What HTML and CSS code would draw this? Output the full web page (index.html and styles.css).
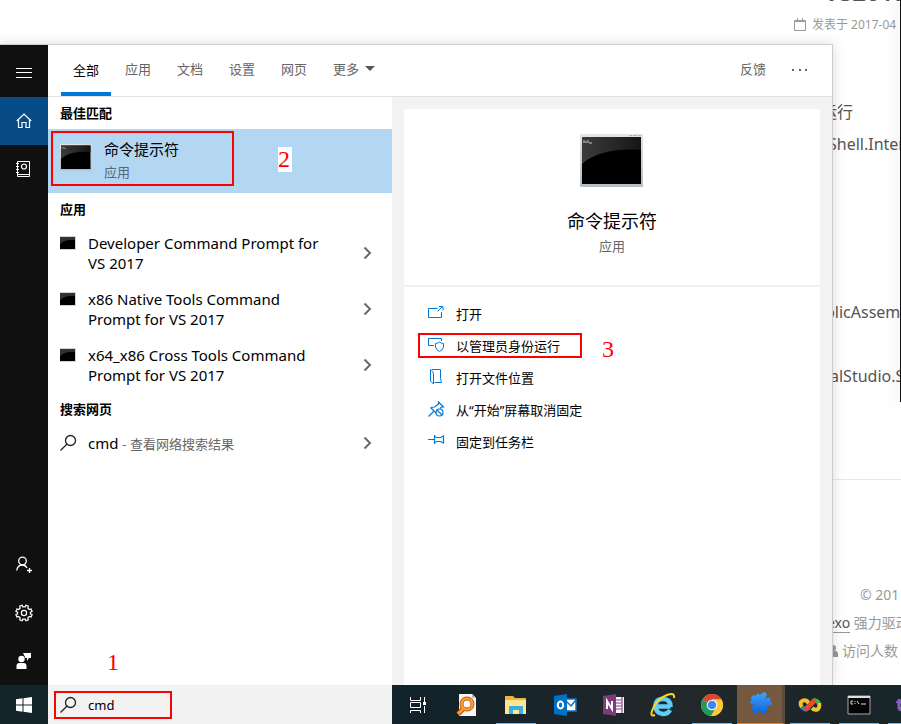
FILE: index.html
```html
<!DOCTYPE html>
<html lang="zh-CN">
<head>
  <meta charset="UTF-8">
  <meta name="viewport" content="width=device-width, initial-scale=1.0">
  <title>命令提示符</title>
  <link rel="stylesheet" href="styles.css">
</head>
<body>
  <!-- shared console icon -->
  <svg class="defs" aria-hidden="true">
    <defs>
      <linearGradient id="glass" x1="0" y1="0" x2="1" y2="0">
        <stop offset="0" stop-color="#3c3c3c"/>
        <stop offset="1" stop-color="#161616"/>
      </linearGradient>
      <linearGradient id="frame" x1="0" y1="0" x2="0" y2="1">
        <stop offset="0" stop-color="#e2e6ea"/>
        <stop offset="1" stop-color="#b4bcc4"/>
      </linearGradient>
      <linearGradient id="leaf" x1="0" y1="0" x2="0" y2="1">
        <stop offset="0" stop-color="#3da4ff"/>
        <stop offset="1" stop-color="#0a62d8"/>
      </linearGradient>
      <symbol id="console" viewBox="0 0 64 54">
        <rect x="0" y="0" width="63" height="53" rx="1" fill="url(#frame)"/>
        <path d="M49 1.500h3M53 1.500h4M58 1.500h3" stroke="#aeb4ba"/>
        <rect x="2" y="3" width="59" height="47" fill="#000"/>
        <path d="M2 3h59v13C36 14 14 19 2 30z" fill="url(#glass)"/>
        <path d="M4 6v3M5 8h2M8 6v3M9 9h3" stroke="#ccc" fill="none"/>
      </symbol>
      <symbol id="console-small" viewBox="0 0 16 14">
        <rect width="16" height="14" fill="#cfd4d8"/>
        <rect y="1" width="15" height="12" fill="#000"/>
        <path d="M0 1h15v3Q6 3 0 8z" fill="#333"/>
      </symbol>
      <symbol id="search" viewBox="0 0 18 18">
        <circle cx="10.500" cy="6.500" r="5" fill="none" stroke="#222" stroke-width="1.300"/>
        <path d="M7 10L.5 16.500" stroke="#222" stroke-width="1.300"/>
      </symbol>
      <symbol id="chevron" viewBox="0 0 10 14">
        <path d="M2.500 1.500L8 7L2.500 12.500" fill="none" stroke="#6a6a6a" stroke-width="2"/>
      </symbol>
    </defs>
  </svg>

  <div class="desktop">
    <main class="blog">
      <h1 class="blog-title">VS2017</h1>
      <p class="post-meta">
        <svg width="12" height="13" viewBox="0 0 12 13" fill="none" stroke="#999"><path d="M.5 2.500h11v10H.5zM.5 3.500h11M3.500 0v3M8.500 0v3"/></svg>
        发表于 2017-04
      </p>
      <p class="post-line post-run">运行</p>
      <p class="post-line post-shell">Shell.Inter</p>
      <p class="post-line post-public">blicAssem</p>
      <p class="post-line post-studio">alStudio.S</p>
      <footer class="blog-footer">
        <p class="copyright">© 201</p>
        <p class="powered"><a href="#">exo</a> 强力驱动</p>
        <p class="visitors">
          <svg width="10" height="12" viewBox="0 0 10 12" fill="#999"><circle cx="5" cy="3" r="3"/><path d="M0 12V9q0-3 3-3.500 2 1.500 4 0 3 .5 3 3.500v3z"/></svg>
          访问人数
        </p>
      </footer>
    </main>
    <div class="side-window"></div>

    <section class="search-panel">
      <nav class="rail">
        <button class="rail-btn menu" aria-label="菜单">
          <svg width="16" height="10" viewBox="0 0 16 10" stroke="#fff"><path d="M0 .5h16M0 4.500h16M0 9.500h16"/></svg>
        </button>
        <button class="rail-btn active" aria-label="主页">
          <svg width="16" height="16" viewBox="0 0 16 16" fill="none" stroke="#fff" stroke-width="1.200"><path d="M.8 8L8 1l7.200 7M2.500 6.500v8h3.500V9.500h4v5h3.500v-8"/></svg>
        </button>
        <button class="rail-btn" aria-label="笔记本">
          <svg width="16" height="18" viewBox="0 0 16 18" fill="none" stroke="#fff"><path d="M1.500 1.500h12v15h-12zM1.500 14.500h12M0 3.500h3M0 6.500h3M0 9.500h3M0 12.500h3"/><circle cx="8" cy="6.500" r="2.500" stroke-width="1.200"/></svg>
        </button>
        <button class="rail-btn push" aria-label="登录">
          <svg width="17" height="18" viewBox="0 0 17 18" fill="none" stroke="#fff" stroke-width="1.300"><circle cx="6.500" cy="5" r="3.800"/><path d="M.7 14.500Q1.500 9 6.500 9q3 0 4.500 3M11 14.500h5M13.500 12v5"/></svg>
        </button>
        <button class="rail-btn" aria-label="设置">
          <svg width="18" height="18" viewBox="0 0 18 18" fill="none" stroke="#fff" stroke-width="1.200"><path d="M7.200 1.200l.6 1.700h2.400l.6-1.700 2.500 1-.5 1.800 1.500 1.500 1.800-.5 1 2.500-1.700.6v1.800l1.700.6-1 2.500-1.800-.5-1.500 1.500.5 1.800-2.500 1-.6-1.700H7.800l-.6 1.700-2.500-1 .5-1.800L3.700 12.500l-1.800.5-1-2.500 1.700-.6V8.100L.9 7.500l1-2.500 1.800.5L5.200 4l-.5-1.800z"/><circle cx="9" cy="9" r="2.600"/></svg>
        </button>
        <button class="rail-btn" aria-label="反馈">
          <svg width="16" height="16" viewBox="0 0 16 16" fill="#fff"><path d="M7 0h8v5h-2l-2 3V5H9.500z"/><circle cx="5.500" cy="6" r="3.200"/><path d="M.5 16v-3q0-3 3-3h4q3 0 3 3v3z"/></svg>
        </button>
      </nav>

      <div class="content">
        <header class="tabs">
          <button class="tab selected">全部</button>
          <button class="tab">应用</button>
          <button class="tab">文档</button>
          <button class="tab">设置</button>
          <button class="tab">网页</button>
          <button class="tab more">更多 <svg width="10" height="5" viewBox="0 0 10 5"><path d="M0 0h10L5 5z" fill="#555"/></svg></button>
          <button class="tab feedback">反馈</button>
          <button class="tab dots" aria-label="更多选项"><svg width="16" height="2" viewBox="0 0 16 2" fill="#666"><path d="M0 0h2v2H0zM7 0h2v2H7zM13 0h2v2h-2z"/></svg></button>
        </header>

        <div class="columns">
          <div class="results">
            <h2>最佳匹配</h2>
            <button class="best">
              <svg width="32" height="27"><use href="#console"/></svg>
              <span class="best-text">
                <span class="best-name">命令提示符</span>
                <span class="best-kind">应用</span>
              </span>
              <span class="mark mark-best"></span>
              <span class="step step-two">2</span>
            </button>

            <h2>应用</h2>
            <button class="result">
              <svg class="app-icon" width="16" height="14"><use href="#console-small"/></svg>
              <span class="result-name">Developer Command Prompt for VS 2017</span>
              <svg class="go" width="10" height="14"><use href="#chevron"/></svg>
            </button>
            <button class="result">
              <svg class="app-icon" width="16" height="14"><use href="#console-small"/></svg>
              <span class="result-name">x86 Native Tools Command Prompt for VS 2017</span>
              <svg class="go" width="10" height="14"><use href="#chevron"/></svg>
            </button>
            <button class="result">
              <svg class="app-icon" width="16" height="14"><use href="#console-small"/></svg>
              <span class="result-name">x64_x86 Cross Tools Command Prompt for VS 2017</span>
              <svg class="go" width="10" height="14"><use href="#chevron"/></svg>
            </button>

            <h2>搜索网页</h2>
            <button class="result web">
              <svg width="18" height="18"><use href="#search"/></svg>
              <span class="result-name">cmd <small>- 查看网络搜索结果</small></span>
              <svg class="go" width="10" height="14"><use href="#chevron"/></svg>
            </button>
            <span class="step step-one">1</span>
          </div>

          <div class="preview">
            <div class="card">
              <div class="app-head">
                <svg width="64" height="54"><use href="#console"/></svg>
                <div class="app-name">命令提示符</div>
                <div class="app-kind">应用</div>
              </div>
              <div class="actions">
                <button class="action">
                  <svg width="18" height="16" viewBox="0 0 18 16" fill="none" stroke="#0078d7"><path d="M9.500 3.500h-9v9h13V7M9.500 6.500l5-5M11 1.500h4v4"/></svg>
                  打开
                </button>
                <button class="action">
                  <svg width="18" height="16" viewBox="0 0 18 16" fill="none" stroke="#0078d7"><path d="M6 8.500H.5v-7h13V4M11.500 5Q9.500 6.500 7.500 6.500V10q1 3.500 4 4.500 3-1 4-4.500V6.500q-2 0-4-1.500z"/></svg>
                  以管理员身份运行
                  <span class="mark mark-admin"></span>
                  <span class="step step-three">3</span>
                </button>
                <button class="action">
                  <svg width="18" height="16" viewBox="0 0 18 16" fill="none" stroke="#0078d7"><path d="M4 .5h8.500v9l1 4H6.500M2.500.5v11.500l3 3V5q0-3-3-4.500"/></svg>
                  打开文件位置
                </button>
                <button class="action">
                  <svg width="18" height="16" viewBox="0 0 18 16" fill="none" stroke="#0078d7" stroke-width="1.200"><path d="M.5 15.500l5-5M2.500 6.500l6 6M3 6.500l3.500-.5 4-3V1l5 5h-2L12 7.500"/><circle cx="11.500" cy="11.500" r="3.500"/><path d="M9 9l5 5"/></svg>
                  从“开始”屏幕取消固定
                </button>
                <button class="action">
                  <svg width="18" height="16" viewBox="0 0 18 16" fill="none" stroke="#0078d7" stroke-width="1.200"><path d="M0 6.500h6.500M6.500 2v9M6.500 3.500L9 4.500h3.500l3-1.500v7l-3-1.500H9l-2.500 1"/></svg>
                  固定到任务栏
                </button>
              </div>
            </div>
          </div>
        </div>
      </div>
    </section>

    <footer class="taskbar">
      <button class="start" aria-label="开始">
        <svg width="16" height="16" viewBox="0 0 16 16" fill="#fff"><path d="M0 2.200L6.500 1.300v6.200H0zM7.500 1.200L16 0v7.500H7.500zM0 8.500h6.500v6.200L0 13.800zM7.500 8.500H16V16l-8.500-1.200z"/></svg>
      </button>
      <label class="search-box">
        <svg width="18" height="18"><use href="#search"/></svg>
        <input type="text" value="cmd" aria-label="搜索">
        <span class="mark mark-search"></span>
      </label>
      <div class="tasks">
        <button class="task" aria-label="任务视图">
          <svg width="24" height="24" viewBox="0 0 24 24" fill="none" stroke="#fff"><path d="M4.500 4v3.500h10V4M4.500 20v-2.500h10V20M4.500 9.500h10v5h-10zM18.500 4v5M18.500 13v7"/><path d="M17 9h3v3h-3z" fill="#fff" stroke="none"/></svg>
        </button>
        <button class="task" aria-label="Everything">
          <svg width="24" height="24" viewBox="0 0 24 24"><path d="M4 1h13l4 4v18H4z" fill="#f6f6f6"/><path d="M17 1v4h4z" fill="#bbb"/><path d="M9 15l-6 6" stroke="#a8480c" stroke-width="5"/><circle cx="12" cy="11" r="5.500" fill="#fff" stroke="#b5500c" stroke-width="4"/><circle cx="12" cy="11" r="5.500" fill="none" stroke="#ff9a2e" stroke-width="2.500"/><path d="M9 15l-6 6" stroke="#ff9a2e" stroke-width="3"/></svg>
        </button>
        <button class="task open" aria-label="文件资源管理器">
          <svg width="24" height="24" viewBox="0 0 24 24"><path d="M1 3h8l2 2h11v16H1z" fill="#e8b63f"/><path d="M1 7h21v14H1z" fill="#ffe492"/><path d="M5 21v-8h14v8h-4v-4H9v4z" fill="#38b1e5"/></svg>
        </button>
        <button class="task" aria-label="Outlook">
          <svg width="24" height="24" viewBox="0 0 24 24"><path d="M12 6h11v12H12z" fill="#fff"/><path d="M12 7l6 6 5-6M12 18h11V6H12" fill="none" stroke="#0c72c7" stroke-width="1.500"/><path d="M1 3l13-2v22L1 21z" fill="#0072c6"/><ellipse cx="7.500" cy="12" rx="2.700" ry="3.500" fill="none" stroke="#fff" stroke-width="2"/></svg>
        </button>
        <button class="task" aria-label="OneNote">
          <svg width="24" height="24" viewBox="0 0 24 24"><path d="M13 4h9v16h-9z" fill="#fff"/><path d="M14 7h5M14 10h5M14 13h5M14 16h5M20 4v16" stroke="#80397b" stroke-width="1.200"/><path d="M1 3l13-2v22L1 21z" fill="#80397b"/><path d="M5 16V8l5 8V8" fill="none" stroke="#fff" stroke-width="2"/></svg>
        </button>
        <button class="task" aria-label="Internet Explorer">
          <svg width="26" height="24" viewBox="0 0 26 24" fill="none"><path d="M6 13.500h14.500M20.500 14q0-8-7.500-8t-7.500 7 7.500 8q5 0 7-4" stroke="#5fcdf5" stroke-width="4.500"/><path d="M5 22q-5 2-3-4Q6 6 17 2q8-3 7 3" stroke="#ffd323" stroke-width="2"/></svg>
        </button>
        <button class="task open" aria-label="Chrome">
          <svg width="24" height="24" viewBox="0 0 24 24"><circle cx="12" cy="12" r="11" fill="#fcc934"/><path d="M12 12L2.500 6.500A11 11 0 0 1 21.500 6.500H12z" fill="#db4437"/><path d="M12 12L2.500 6.500A11 11 0 0 0 11 23l5-8.500z" fill="#219b58"/><path d="M12 6.500h9.500A11 11 0 0 1 11 23l5.500-8.500z" fill="#fcc934"/><circle cx="12" cy="12" r="5.300" fill="#fff"/><circle cx="12" cy="12" r="4.300" fill="#4285f4"/></svg>
        </button>
        <button class="task current" aria-label="Clover">
          <svg width="24" height="24" viewBox="0 0 24 24" fill="url(#leaf)"><path d="M11 10Q6 5 9 2q2-1 3 1 3-4 6-2 2 3-2 7 3-3 6-2 1 1 0 3 3 1 2 4-3 2-7 0 4 3 3 6-1 2-3 1 0 3-3 2-2-2-2-6-1 5-4 6-3 0-2-3-3 0-3-3 1-3 5-4-5 1-6-1 0-3 2-3-2-2 0-4 3-2 7 2z"/></svg>
        </button>
        <button class="task open" aria-label="Visual Studio">
          <svg width="24" height="24" viewBox="0 0 24 24" fill="none" stroke-width="4"><path d="M12 12L9 8q-3-2-6 1-1 3 1 5" stroke="#f5bd2c"/><path d="M4 14q3 4 7 1" stroke="#1d87d6"/><path d="M15 8q3-2 6 2" stroke="#43b649"/><path d="M21 10q1 4-1 6-3 2-6-1" stroke="#f3c42f"/><path d="M7 17L17 7" stroke="#e94a2b" stroke-width="5"/></svg>
        </button>
        <button class="task open" aria-label="命令提示符">
          <svg width="24" height="20" viewBox="0 0 24 20"><path d="M1 1h22v18H1z" fill="#050505" stroke="#aaa"/><path d="M1 2h22" stroke="#ddd" stroke-width="2"/><path d="M6 6H4v3h2M8 6v1M8 8v1M10 6l2 3M14 9h5" fill="none" stroke="#ddd"/></svg>
        </button>
        <button class="task open" aria-label="Visual Studio 2017">
          <svg width="24" height="24" viewBox="0 0 24 24" fill="none" stroke="#8661c5" stroke-width="3"><path d="M3 6v9h6q3-4 0-5L3 9l17-7v20L3 16"/></svg>
        </button>
      </div>
    </footer>
  </div>
</body>
</html>
```

FILE: styles.css
```css
* {
  box-sizing: border-box;
}

body {
  margin: 0;
  font-family: "Noto Sans", "Noto Sans CJK SC", sans-serif;
  font-size: 13px;
  color: #000;
  background: #fff;
}

h1, h2, p {
  margin: 0;
}

button {
  border: 0;
  padding: 0;
  background: none;
  font: inherit;
  color: inherit;
  text-align: left;
}

svg {
  display: block;
  flex: none;
}

.defs {
  position: absolute;
  width: 0;
  height: 0;
}

.desktop {
  position: relative;
  display: flex;
  flex-direction: column;
  height: 100vh;
  overflow: hidden;
}

/* blog page behind the search panel */
.blog {
  flex: 1;
  min-height: 0;
  padding-left: 794px;
  overflow: hidden;
  white-space: nowrap;
  color: #555;
}

.blog-title {
  margin-top: -28px;
  padding-left: 30px;
  font-size: 24px;
  font-weight: 600;
  line-height: 40px;
}

.post-meta {
  display: flex;
  align-items: center;
  gap: 6px;
  height: 24px;
  font-size: 12px;
  color: #999;
}

.post-line {
  font-size: 16px;
  line-height: 32px;
}

.post-run {
  margin-top: 60px;
  padding-left: 27px;
}

.post-shell {
  padding-left: 34px;
}

.post-public {
  margin-top: 136px;
  padding-left: 31px;
}

.post-studio {
  margin-top: 32px;
  padding-left: 36px;
}

.blog-footer {
  margin-top: 87px;
  padding-top: 101px;
  border-top: 1px solid #e8e8e8;
  font-size: 14px;
  line-height: 28px;
  color: #999;
}

.copyright {
  padding-left: 66px;
}

.powered {
  padding-left: 33px;
}

.powered a {
  color: #555;
  text-decoration: none;
  border-bottom: 1px solid #999;
}

.visitors {
  display: flex;
  align-items: center;
  gap: 4px;
  padding-left: 34px;
}

.side-window {
  position: absolute;
  top: 0;
  right: 0;
  width: 1px;
  height: 402px;
  background: #111;
  box-shadow: 0 0 14px rgba(0, 0, 0, 0.5);
}

/* search panel */
.search-panel {
  position: absolute;
  top: 44px;
  bottom: 39px;
  left: 0;
  width: 833px;
  max-width: 100%;
  display: flex;
  background: #fff;
  border-top: 1px solid #ccc;
  border-right: 1px solid #ccc;
  box-shadow: 0 0 12px rgba(0, 0, 0, 0.15);
}

.rail {
  display: flex;
  flex-direction: column;
  width: 48px;
  background: #101010;
}

.rail-btn {
  display: flex;
  align-items: center;
  justify-content: center;
  height: 48px;
}

.rail-btn.menu {
  height: 52px;
  padding-top: 4px;
}

.rail-btn.active {
  background: #074c86;
}

.rail-btn.push {
  margin-top: auto;
}

.content {
  flex: 1;
  display: flex;
  flex-direction: column;
  min-width: 0;
}

.tabs {
  display: flex;
  gap: 2px;
  height: 52px;
  padding: 0 12px 0 13px;
  border-bottom: 1px solid #e2e2e2;
}

.tab {
  display: flex;
  align-items: center;
  padding: 0 12px 4px;
  color: #666;
}

.tab.selected {
  padding-bottom: 0;
  color: #000;
  border-top: 2px solid transparent;
  border-bottom: 4px solid #0078d7;
}

.tab.more {
  gap: 6px;
}

.tab.feedback {
  margin-left: auto;
}

.tab.dots {
  padding-bottom: 1px;
}

/* result list and preview */
.columns {
  flex: 1;
  display: flex;
  min-height: 0;
}

.results {
  position: relative;
  width: 344px;
}

.results h2 {
  padding-left: 12px;
  font-size: 13px;
  line-height: 32px;
}

.best {
  position: relative;
  display: flex;
  align-items: center;
  gap: 12px;
  width: 100%;
  height: 64px;
  padding: 0 12px;
  background: #b3d6f2;
}

.best > svg {
  margin-bottom: 8px;
}

.best-text {
  display: flex;
  flex-direction: column;
}

.best-name {
  font-size: 15px;
  line-height: 22px;
}

.best-kind {
  line-height: 24px;
  color: #56697a;
}

.result {
  display: flex;
  align-items: center;
  width: 100%;
  height: 56px;
  padding: 0 20px 0 12px;
  font-size: 15px;
  line-height: 20px;
}

.result.web {
  height: 36px;
}

.app-icon {
  align-self: flex-start;
  margin-top: 11px;
}

.result-name {
  flex: 1;
  padding: 0 32px 0 12px;
}

.web .result-name {
  padding-left: 10px;
}

.result small {
  font-size: 13px;
  color: #666;
}

.preview {
  flex: 1;
  display: flex;
  padding: 12px 12px 0;
  background: #f3f3f3;
}

.card {
  flex: 1;
  background: #fff;
}

.app-head {
  display: flex;
  flex-direction: column;
  align-items: center;
  height: 178px;
  padding-top: 25px;
  border-bottom: 2px solid #f0f0f0;
}

.app-name {
  margin-top: 20px;
  font-size: 18px;
  line-height: 26px;
}

.app-kind {
  line-height: 24px;
  color: #666;
}

.actions {
  padding: 10px 24px;
}

.action {
  position: relative;
  display: flex;
  align-items: center;
  gap: 10px;
  width: 100%;
  height: 32px;
}

/* red frames and step numbers */
.mark {
  position: absolute;
  border: 2px solid #f00;
}

.mark-best {
  top: 2px;
  left: 3px;
  width: 183px;
  height: 55px;
}

.mark-admin {
  top: 4px;
  left: -10px;
  width: 164px;
  height: 25px;
}

.mark-search {
  top: 6px;
  left: 6px;
  width: 118px;
  height: 28px;
}

.step {
  position: absolute;
  font-family: "Liberation Serif", serif;
  font-size: 24px;
  line-height: 25px;
  color: #f00;
}

.step-one {
  left: 59px;
  bottom: 10px;
}

.step-two {
  top: 18px;
  left: 230px;
  width: 14px;
  background: #fff;
}

.step-three {
  top: 8px;
  left: 174px;
}

/* taskbar */
.taskbar {
  position: relative;
  display: flex;
  flex: none;
  height: 39px;
  background: #14242a;
}

.start {
  display: flex;
  align-items: center;
  justify-content: center;
  width: 48px;
}

.search-box {
  position: relative;
  display: flex;
  align-items: center;
  gap: 10px;
  width: 344px;
  padding-left: 12px;
  background: #f2f2f2;
}

.search-box input {
  width: 240px;
  padding: 0;
  border: 0;
  outline: 0;
  background: none;
  font: inherit;
}

.tasks {
  flex: 1;
  display: flex;
  gap: 1px;
  min-width: 0;
  padding-left: 2px;
  overflow: hidden;
  background: linear-gradient(90deg, #10222a, #22282a 60%, #182529);
}

.task {
  position: relative;
  display: flex;
  flex: none;
  align-items: center;
  justify-content: center;
  width: 48px;
}

.task.open::after {
  content: "";
  position: absolute;
  right: 4px;
  bottom: 0;
  left: 4px;
  height: 1px;
  background: #76b9ed;
}

.task.current {
  background: #76583f;
  border-right: 3px solid #5d4a3b;
  border-bottom: 1px solid #f47a20;
}
```
